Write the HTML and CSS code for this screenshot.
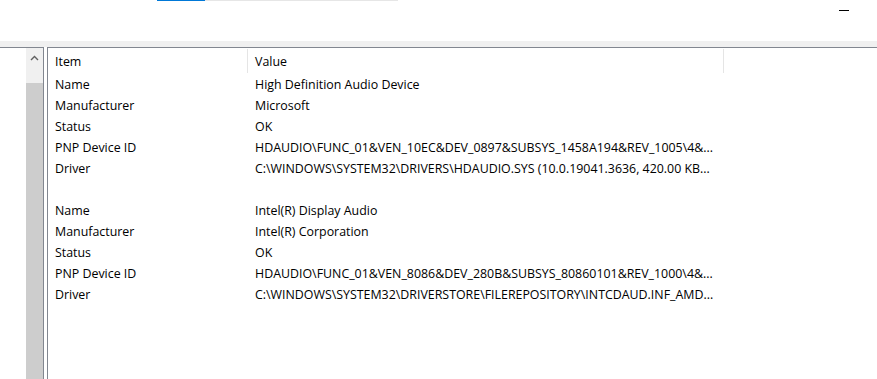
FILE: index.html
```html
<!DOCTYPE html>
<html lang="en">
<head>
    <meta charset="UTF-8">
    <title>System Information - Sound Device</title>
    <link rel="stylesheet" href="styles.css">
</head>
<body>
    <div class="titlebar">
        <div class="progress"><div class="progress-fill"></div></div>
        <div class="minimize"></div>
    </div>
    <div class="band"></div>

    <div class="main">
        <div class="tree-pane">
            <div class="tree-blank"></div>
            <div class="scrollbar">
                <div class="scroll-up">
                    <svg width="9" height="6" viewBox="0 0 9 6"><path d="M1 5 L4.5 1.5 L8 5" fill="none" stroke="#606060" stroke-width="1.4"/></svg>
                </div>
                <div class="scroll-thumb"></div>
            </div>
        </div>

        <div class="list-pane">
            <table class="list">
                <colgroup>
                    <col class="col-item">
                    <col class="col-value">
                    <col>
                </colgroup>
                <thead>
                    <tr>
                        <th class="sep">Item</th>
                        <th class="sep">Value</th>
                        <th></th>
                    </tr>
                </thead>
                <tbody>
                    <tr><td>Name</td><td>High Definition Audio Device</td><td></td></tr>
                    <tr><td>Manufacturer</td><td>Microsoft</td><td></td></tr>
                    <tr><td>Status</td><td>OK</td><td></td></tr>
                    <tr><td>PNP Device ID</td><td>HDAUDIO\FUNC_01&amp;VEN_10EC&amp;DEV_0897&amp;SUBSYS_1458A194&amp;REV_1005\4&amp;...</td><td></td></tr>
                    <tr><td>Driver</td><td>C:\WINDOWS\SYSTEM32\DRIVERS\HDAUDIO.SYS (10.0.19041.3636, 420.00 KB...</td><td></td></tr>
                    <tr class="blank"><td></td><td></td><td></td></tr>
                    <tr><td>Name</td><td>Intel(R) Display Audio</td><td></td></tr>
                    <tr><td>Manufacturer</td><td>Intel(R) Corporation</td><td></td></tr>
                    <tr><td>Status</td><td>OK</td><td></td></tr>
                    <tr><td>PNP Device ID</td><td>HDAUDIO\FUNC_01&amp;VEN_8086&amp;DEV_280B&amp;SUBSYS_80860101&amp;REV_1000\4&amp;...</td><td></td></tr>
                    <tr><td>Driver</td><td>C:\WINDOWS\SYSTEM32\DRIVERSTORE\FILEREPOSITORY\INTCDAUD.INF_AMD...</td><td></td></tr>
                </tbody>
            </table>
        </div>
    </div>
</body>
</html>
```

FILE: styles.css
```css
body {
    margin: 0;
    width: 877px;
    height: 379px;
    overflow: hidden;
    background-color: white;
    font-family: "Segoe UI", "Open Sans", sans-serif;
    font-size: 12.4px;
    color: #000;
}
.titlebar {
    display: flex;
    align-items: flex-start;
    height: 41px;
}
.progress {
    margin-left: 157px;
    width: 241px;
    height: 1px;
    background-color: #e6e6e6;
}
.progress-fill {
    width: 48px;
    height: 1px;
    background-color: #0078d7;
}
.minimize {
    margin-left: auto;
    margin-top: 10px;
    margin-right: 28px;
    width: 10px;
    height: 1px;
    background-color: #000;
}
.band {
    height: 6px;
    background-color: #f0f0f0;
}
.main {
    display: flex;
    gap: 3px;
    height: 332px;
}
.tree-pane {
    display: flex;
    width: 43px;
    border-top: 1px solid #828790;
    border-right: 1px solid #828790;
}
.tree-blank {
    width: 26px;
}
.scrollbar {
    width: 17px;
    background-color: #f0f0f0;
    display: flex;
    flex-direction: column;
}
.scroll-up {
    height: 20px;
    display: flex;
    align-items: center;
    justify-content: center;
}
.scroll-thumb {
    margin-top: 15px;
    flex-grow: 1;
    background-color: #cdcdcd;
}
.list-pane {
    flex-grow: 1;
    border-top: 1px solid #828790;
    border-left: 1px solid #828790;
    overflow: hidden;
}
.list {
    width: 100%;
    border-collapse: collapse;
    table-layout: fixed;
}
.col-item {
    width: 200px;
}
.col-value {
    width: 476px;
}
th, td {
    padding: 0 0 0 7px;
    text-align: left;
    font-weight: normal;
    white-space: nowrap;
    overflow: hidden;
    text-overflow: ellipsis;
}
th {
    height: 26px;
}
th.sep {
    background: linear-gradient(#e5e5e5, #e5e5e5) right 1px / 1px 24px no-repeat;
}
td {
    height: 21px;
}
```
